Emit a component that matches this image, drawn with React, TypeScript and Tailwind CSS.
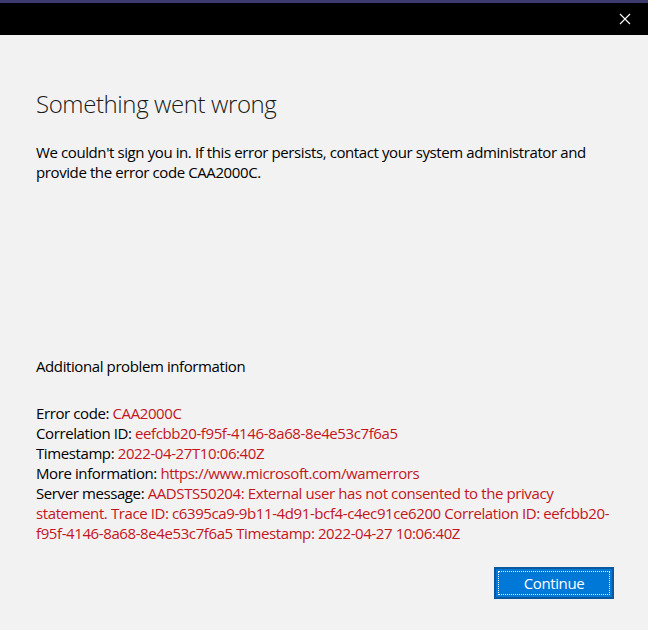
import React from "react";

const red = "text-[#c4161c]";

export default function App() {
  return (
    <div
      className="w-[648px] h-[630px] bg-[#f2f2f2] flex flex-col overflow-hidden text-[#000] tracking-[-0.4px]"
      style={{ fontFamily: '"Open Sans", "Noto Sans", sans-serif' }}
    >
      <div className="h-[3px] bg-[#3b3b6d]" />
      <div className="h-[32px] bg-black flex justify-end items-center">
        <div className="w-[46px] h-full flex items-center justify-center">
          <svg width="12" height="12" viewBox="0 0 12 12">
            <path d="M1 1 L11 11 M11 1 L1 11" stroke="#fff" strokeWidth="1.1" />
          </svg>
        </div>
      </div>
      <div className="flex-1 flex flex-col px-[36px]">
        <h1 className="mt-[53px] text-[24px] leading-[32px] font-light text-[#1a1a1a]">
          Something went wrong
        </h1>
        <p className="mt-[22px] text-[15px] leading-[20px] whitespace-nowrap">
          We couldn't sign you in. If this error persists, contact your system administrator and
          <br />
          provide the error code CAA2000C.
        </p>
        <p className="mt-[174px] text-[15px] leading-[20px]">Additional problem information</p>
        <div className="mt-[27px] text-[15px] leading-[20px] whitespace-nowrap">
          <div>
            Error code: <span className={red}>CAA2000C</span>
          </div>
          <div>
            Correlation ID: <span className={red}>eefcbb20-f95f-4146-8a68-8e4e53c7f6a5</span>
          </div>
          <div>
            Timestamp: <span className={red}>2022-04-27T10:06:40Z</span>
          </div>
          <div>
            More information: <span className={red}>https://www.microsoft.com/wamerrors</span>
          </div>
          <div>
            Server message:{" "}
            <span className={red}>
              AADSTS50204: External user has not consented to the privacy
              <br />
              statement. Trace ID: c6395ca9-9b11-4d91-bcf4-c4ec91ce6200 Correlation ID: eefcbb20-
              <br />
              f95f-4146-8a68-8e4e53c7f6a5 Timestamp: 2022-04-27 10:06:40Z
            </span>
          </div>
        </div>
        <div className="flex justify-end mt-[24px]">
          <button className="mr-[-2px] w-[120px] h-[32px] bg-[#0078d7] border-2 border-[#0a58a0] p-[2px]">
            <div className="w-full h-full border border-dotted border-white flex items-center justify-center text-white text-[15px]">
              Continue
            </div>
          </button>
        </div>
      </div>
    </div>
  );
}
